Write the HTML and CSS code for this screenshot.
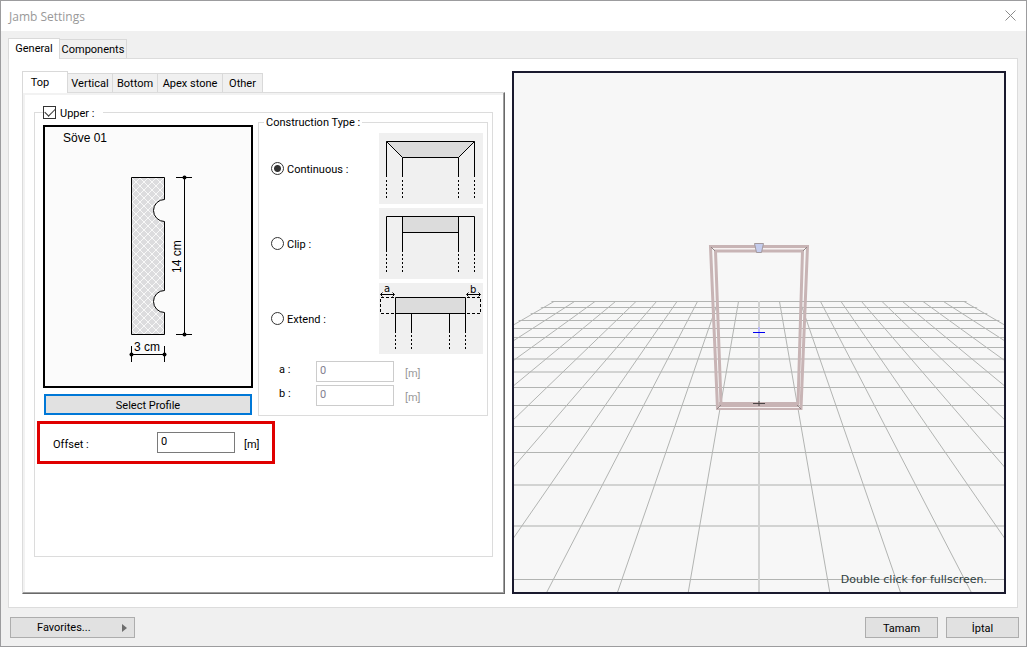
FILE: index.html
```html
<!DOCTYPE html>
<html lang="en">
<head>
    <meta charset="UTF-8">
    <meta name="viewport" content="width=device-width, initial-scale=1.0">
    <title>Jamb Settings</title>
    <link rel="stylesheet" href="styles.css">
</head>
<body>
    <div class="window">
        <!-- Title bar -->
        <header class="titlebar">
            <h1>Jamb Settings</h1>
            <button type="button" class="close" aria-label="Close">
                <svg width="11" height="11" viewBox="0 0 11 11"><path d="M.5.5l10 10M10.5.5l-10 10" stroke="#8a8a8a" fill="none"/></svg>
            </button>
        </header>

        <div class="tabs main-tabs" role="tablist">
            <button type="button" class="tab general active" role="tab" aria-selected="true">General</button>
            <button type="button" class="tab components" role="tab">Components</button>
        </div>

        <main class="panel">
            <!-- Settings column -->
            <section class="settings">
                <div class="tabs" role="tablist">
                    <button type="button" class="tab top active" role="tab" aria-selected="true">Top</button>
                    <button type="button" class="tab vertical" role="tab">Vertical</button>
                    <button type="button" class="tab bottom" role="tab">Bottom</button>
                    <button type="button" class="tab apex" role="tab">Apex stone</button>
                    <button type="button" class="tab other" role="tab">Other</button>
                </div>

                <div class="sheet">
                    <fieldset class="upper">
                        <legend><input type="checkbox" id="upper" checked><label for="upper">Upper :</label></legend>

                        <div class="columns">
                            <div class="profile">
                                <svg class="profile-view" viewBox="45 127 206 259">
                                    <defs>
                                        <pattern id="hatch" x="132" y="178" width="8" height="8" patternUnits="userSpaceOnUse">
                                            <rect width="8" height="8" fill="#dcdcde"/>
                                            <path d="M0 0L8 8M8 0L0 8" stroke="#fff" stroke-width=".8"/>
                                        </pattern>
                                    </defs>
                                    <text x="63" y="142">Söve 01</text>
                                    <path d="M131.5 177.5H164.5V199.5A11 11 0 0 0 164.5 221.5V290.5A11 11 0 0 0 164.5 312.5V334.5H131.5Z" fill="url(#hatch)" stroke="#000"/>
                                    <path d="M184.5 177.5V334.5M176 177.5H192M176 334.5H192M131.5 354.5H164.5M131.5 346V362M164.5 346V362" stroke="#000" fill="none"/>
                                    <circle cx="184.500" cy="177.500" r="2"/>
                                    <circle cx="184.500" cy="334.500" r="2"/>
                                    <circle cx="131.500" cy="354.500" r="2"/>
                                    <circle cx="164.500" cy="354.500" r="2"/>
                                    <text x="134" y="351">3 cm</text>
                                    <text transform="translate(181 273) rotate(-90)">14 cm</text>
                                </svg>
                                <button type="button" class="btn select-profile">Select Profile</button>
                            </div>

                            <fieldset class="construction">
                                <legend>Construction Type :</legend>
                                <div class="option">
                                    <input type="radio" name="type" id="continuous" checked>
                                    <label for="continuous">Continuous :</label>
                                    <svg width="104" height="71" viewBox="0 0 104 71">
                                        <path d="M7.500 8.500H95.500L79.500 24.500H23.500Z" fill="#dcdcdc"/>
                                        <path d="M7.500 44V8.500H95.500V44M23.500 44V24.500H79.500V44" fill="none" stroke="#000"/>
                                        <path d="M7.500 8.500L23.500 24.500M95.500 8.500L79.500 24.500" stroke="#000"/>
                                        <path d="M7.500 47V66M23.500 47V66M79.500 47V66M95.500 47V66" stroke="#000" stroke-dasharray="2 2"/>
                                    </svg>
                                </div>
                                <div class="option">
                                    <input type="radio" name="type" id="clip">
                                    <label for="clip">Clip :</label>
                                    <svg width="104" height="71" viewBox="0 0 104 71">
                                        <path d="M23.500 8.500H79.500V24.500H23.500Z" fill="#dcdcdc"/>
                                        <path d="M7.500 44V8.500H95.500V44M23.500 44V8.500M79.500 44V8.500M23.500 24.500H79.500" fill="none" stroke="#000"/>
                                        <path d="M7.500 46V66M23.500 46V66M79.500 46V66M95.500 46V66" stroke="#000" stroke-dasharray="2 2"/>
                                    </svg>
                                </div>
                                <div class="option">
                                    <input type="radio" name="type" id="extend">
                                    <label for="extend">Extend :</label>
                                    <svg width="104" height="71" viewBox="0 0 104 71">
                                        <path d="M16.500 14.500H86.500V30.500H16.500Z" fill="#dcdcdc" stroke="#000"/>
                                        <path d="M16.500 30V50M32.500 30V50M70.500 30V50M86.500 30V50M2 11.500H15M88 11.500H101" stroke="#000"/>
                                        <path d="M3.500 9.500L1.500 11.500L3.500 13.500M13.500 9.500L15.500 11.500L13.500 13.500M89.500 9.500L87.500 11.500L89.500 13.500M99.500 9.500L101.500 11.500L99.500 13.500" stroke="#000" fill="none"/>
                                        <path d="M16.500 52V68M32.500 52V68M70.500 52V68M86.500 52V68" stroke="#000" stroke-dasharray="2 2"/>
                                        <path d="M15 14.500H1.500V30.500H15M88 14.500H101.500V30.500H88" fill="none" stroke="#000" stroke-dasharray="3 2"/>
                                        <text class="mark" x="5" y="9">a</text>
                                        <text class="mark" x="91" y="10">b</text>
                                    </svg>
                                </div>
                                <div class="measure first">
                                    <label for="a">a :</label>
                                    <input type="text" id="a" value="0" disabled>
                                    <span class="unit">[m]</span>
                                </div>
                                <div class="measure">
                                    <label for="b">b :</label>
                                    <input type="text" id="b" value="0" disabled>
                                    <span class="unit">[m]</span>
                                </div>
                            </fieldset>
                        </div>

                        <div class="offset">
                            <label for="offset">Offset :</label>
                            <input type="text" id="offset" value="0">
                            <span>[m]</span>
                        </div>
                    </fieldset>
                </div>
            </section>

            <!-- 3D preview -->
            <section class="scene">
                <svg viewBox="514 73 490 519" preserveAspectRatio="xMidYMid slice">
                    <defs>
                        <clipPath id="floor"><path d="M554 300H964L1467 592H51Z"/></clipPath>
                    </defs>
                    <g clip-path="url(#floor)" stroke="#b2b4b2" fill="none">
                        <path d="M514 301.500H1004M514 307.500H1004M514 313.500H1004M514 320.500H1004M514 328.500H1004M514 337.500H1004M514 347.500H1004M514 387.500H1004M514 405.500H1004M514 426.500H1004M514 452.500H1004M514 579.500H1004"/>
                        <path stroke="#d2d3d2" stroke-width="2" d="M514 359H1004M514 372H1004M514 485H1004M514 526H1004M759 301V592"/>
                        <path d="M779.500 301.500L829.700 592M800 301.500L900.400 592M820.500 301.500L971.100 592M841 301.500L1041.800 592M861.500 301.500L1112.500 592M882 301.500L1183.200 592M902.500 301.500L1253.900 592M923 301.500L1324.600 592M943.500 301.500L1395.300 592M964 301.500L1466 592"/>
                        <path d="M738.500 301.500L688.300 592M718 301.500L617.600 592M697.500 301.500L546.900 592M677 301.500L476.200 592M656.500 301.500L405.500 592M636 301.500L334.800 592M615.500 301.500L264.100 592M595 301.500L193.400 592M574.500 301.500L122.700 592M554 301.500L52 592"/>
                    </g>
                    <g fill="none" stroke="#c8b4b5">
                        <path stroke-width="3" d="M710.500 246.500H807.500L801 408.500H717.500Z"/>
                        <path stroke-width="3" d="M721 404L715.500 251H802.500L798 404"/>
                        <path stroke-width="5" d="M719 404.500H799"/>
                        <path stroke="#f7f1f1" d="M714 248.500H804M719 407.500H799"/>
                        <path stroke="#8f8484" d="M711 247L715 251M807 247L803 251M717 409L721 405M801 409L797 405"/>
                    </g>
                    <path d="M754.500 243.500H763.500L761.500 252.500H756.500Z" fill="#c5cdee" stroke="#a39a9e"/>
                    <path d="M759 327V338" stroke="#bcbcf8" stroke-width="2"/>
                    <path d="M753 332.500H765" stroke="#0000f0"/>
                    <path d="M753 403.500H765M759 401V406" stroke="#4a4444"/>
                </svg>
                <span class="hint">Double click for fullscreen.</span>
            </section>
        </main>

        <!-- Buttons -->
        <footer class="footer">
            <button type="button" class="btn favorites">Favorites...
                <svg width="5" height="8" viewBox="0 0 5 8"><path d="M0 0L5 4L0 8Z" fill="#6d6d6d"/></svg>
            </button>
            <button type="button" class="btn">Tamam</button>
            <button type="button" class="btn">İptal</button>
        </footer>
    </div>
</body>
</html>
```
FILE: styles.css
```css
* {
    box-sizing: border-box;
}

body {
    margin: 0;
    background: #9c9c9e;
    color: #000;
    font-family: Roboto, "Liberation Sans", sans-serif;
    font-size: 11px;
    line-height: 15px;
}

button,
input {
    font: inherit;
    color: inherit;
    margin: 0;
}

svg {
    display: block;
}

fieldset {
    margin: 0;
    padding: 0;
    border: 1px solid #dcdcdc;
    min-width: 0;
}

legend {
    padding: 0;
}

/* Window */
.window {
    display: flex;
    flex-direction: column;
    min-height: 100vh;
    border: 1px solid #9c9c9e;
    background: #f0f0f0;
}

.titlebar {
    display: flex;
    align-items: center;
    justify-content: space-between;
    height: 30px;
    padding: 0 10px 0 8px;
    background: #fff;
}

.titlebar h1 {
    margin: 0;
    font-family: "Open Sans", sans-serif;
    font-size: 12px;
    font-weight: normal;
    color: #999;
}

.close {
    padding: 0 0 2px;
    border: none;
    background: none;
}

/* Tabs */
.tabs {
    display: flex;
    align-items: flex-end;
    height: 21px;
}

.main-tabs {
    height: 20px;
    margin: 7px 7px 0;
}

.tab {
    height: 19px;
    padding: 1px 0 0;
    border: 1px solid #d9d9d9;
    border-left: none;
    border-bottom: none;
    background: #f0f0f0;
}

.tab.active {
    position: relative;
    height: 22px;
    margin-bottom: -1px;
    padding-bottom: 2px;
    border-left: 1px solid #d9d9d9;
    background: #fff;
}

.main-tabs .active {
    height: 21px;
}

.general {
    width: 52px;
}

.components {
    width: 67px;
}

.top {
    width: 46px;
    padding-right: 10px;
}

.vertical {
    width: 45px;
}

.bottom {
    width: 45px;
}

.apex {
    width: 65px;
}

.other {
    width: 40px;
}

/* Main panel */
.panel {
    display: flex;
    flex: 1;
    gap: 7px;
    margin: 0 8px 0 7px;
    padding: 12px 11px 13px 13px;
    border: 1px solid #dcdcdc;
    background: #fff;
}

.settings {
    display: flex;
    flex: none;
    flex-direction: column;
    width: 483px;
}

.sheet {
    display: flex;
    flex: 1;
    flex-direction: column;
    padding: 12px 11px 36px;
    border: 1px solid #dcdcdc;
    border-right-color: #696969;
    border-bottom-color: #696969;
    box-shadow: inset -1px -1px #a0a0a0, inset 2px 2px #f2f2f2;
}

.upper {
    flex: 1;
    padding: 0 4px 0 8px;
}

.upper > legend {
    display: flex;
    align-items: center;
    gap: 4px;
    width: 60px;
    height: 15px;
}

.upper > legend label {
    padding-top: 1px;
}

.columns {
    display: flex;
    gap: 5px;
}

/* Check box and radio buttons */
input[type="checkbox"],
input[type="radio"] {
    flex: none;
    width: 13px;
    height: 13px;
    border: 1px solid #333;
    background: #fff;
    appearance: none;
}

input[type="checkbox"]:checked::before {
    content: "";
    display: block;
    width: 9px;
    height: 5px;
    margin: 2px 1px;
    border: solid #333;
    border-width: 0 0 1px 1px;
    transform: translateY(-1px) rotate(-45deg);
}

input[type="radio"] {
    border-radius: 50%;
}

input[type="radio"]:checked {
    background: radial-gradient(circle, #333 3px, #fff 4px);
}

input[type="text"] {
    width: 78px;
    height: 21px;
    padding: 0 3px 2px;
    border: 1px solid #7a7a7a;
    border-radius: 0;
    background: #fff;
}

input[type="text"]:disabled {
    border-color: #ccc;
    color: #838090;
}

/* Profile preview */
.profile {
    flex: none;
    width: 210px;
    padding-top: 5px;
}

.profile-view {
    width: 210px;
    height: 263px;
    border: 2px solid #000;
    background: #fbfbfb;
    font-family: "Liberation Sans", sans-serif;
    font-size: 12px;
}

.btn {
    width: 73px;
    height: 21px;
    padding: 1px 0 0;
    border: 1px solid #adadad;
    background: #e1e1e1;
}

.select-profile {
    display: block;
    width: 208px;
    margin: 6px 1px 0;
    border: 2px solid #0078d7;
}

/* Construction type */
.construction {
    flex: 1;
    margin-top: -5px;
    padding: 3px 4px 9px 12px;
}

.construction legend {
    margin-left: -7px;
    padding: 1px 2px 0;
    line-height: 14px;
}

.option {
    display: flex;
    align-items: center;
    gap: 3px;
    margin-bottom: 4px;
}

.option label {
    padding-top: 1px;
}

.option svg {
    margin-left: auto;
    background: #f0f0f0;
}

.mark {
    font-family: "DejaVu Sans", sans-serif;
    font-size: 10px;
}

.measure {
    display: flex;
    align-items: center;
    height: 21px;
    margin-top: 3px;
    padding-left: 8px;
}

.measure.first {
    margin-top: 7px;
}

.measure label {
    width: 37px;
    padding-bottom: 4px;
}

.measure .unit {
    margin-left: 11px;
    padding-top: 4px;
    color: #999;
}

/* Offset row */
.offset {
    display: flex;
    align-items: center;
    width: 238px;
    height: 43px;
    margin: 5px 0 0 -6px;
    padding-left: 13px;
    border: 3px solid #e00000;
}

.offset label {
    width: 104px;
}

.offset span {
    margin-left: 9px;
}

.offset label,
.offset span {
    padding-top: 3px;
}

/* 3D preview */
.scene {
    position: relative;
    flex: 1;
    min-width: 0;
    border: 2px solid #1a1a2e;
    background: #f7f7f7;
}

.scene svg {
    width: 100%;
    height: 100%;
}

.hint {
    position: absolute;
    right: 17px;
    bottom: 5px;
    font-family: "DejaVu Sans", sans-serif;
    font-size: 11px;
    color: #2f4040;
}

/* Footer */
.footer {
    display: flex;
    gap: 8px;
    padding: 9px 7px 8px 9px;
}

.favorites {
    display: flex;
    align-items: center;
    justify-content: space-between;
    width: 125px;
    margin-right: auto;
    padding: 0 7px 0 26px;
}
```
